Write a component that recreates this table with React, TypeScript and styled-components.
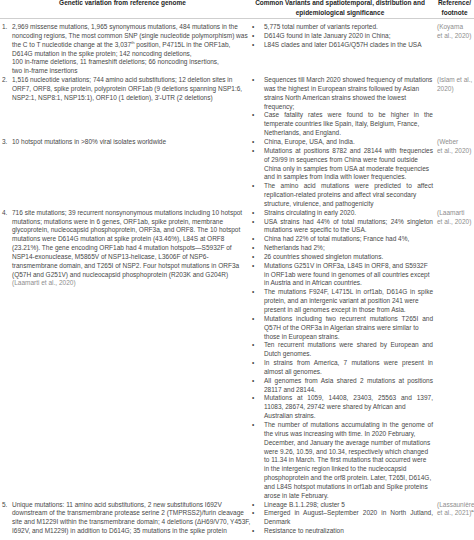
import React from 'react';
import styled, { createGlobalStyle } from 'styled-components';

/* ====================== Styled Components ====================== */

const GlobalStyle = createGlobalStyle`
  html, body {
    margin: 0;
    padding: 0;
    background: #ffffff;
  }

  body {
    font-family: 'Liberation Sans', Arial, Helvetica, sans-serif;
    overflow: hidden;
  }
`;

const COLUMNS = '245px 190px 1fr';

const Table = styled.div`
  width: 474px;
  margin-top: -2px; /* 원본은 헤더 윗부분이 잘려 있음 */
  font-size: 6.5px;
  color: #484848;
`;

const HeaderRow = styled.div`
  display: grid;
  grid-template-columns: ${COLUMNS};
  height: 20px;
  line-height: 10px;
  font-weight: 700;
  color: #1f1f1f;
  border-bottom: 1px solid #cfcfcf;
`;

const HeadCell = styled.div<{ $align?: 'start' | 'center' }>`
  display: flex;
  flex-direction: column;
  justify-content: ${({ $align }) => ($align === 'start' ? 'flex-start' : 'center')};
  text-align: center;
  white-space: nowrap;
`;

const Body = styled.div`
  padding-top: 4px;
`;

const BodyRow = styled.div`
  display: grid;
  grid-template-columns: ${COLUMNS};
  line-height: 8.85px;
`;

const GeneCell = styled.div`
  display: flex;
  padding-left: 2px;
`;

const ItemNum = styled.span`
  width: 10px;
  flex-shrink: 0;
`;

const TextLine = styled.div<{ $justify?: boolean }>`
  height: 8.85px;
  white-space: ${({ $justify }) => ($justify ? 'normal' : 'nowrap')};
  text-align: ${({ $justify }) => ($justify ? 'justify' : 'left')};
  text-align-last: ${({ $justify }) => ($justify ? 'justify' : 'auto')};
`;

const VariantList = styled.div`
  display: flex;
  flex-direction: column;
  padding-right: 2px;
`;

const BulletItem = styled.div`
  display: flex;
`;

const BulletDot = styled.span`
  width: 19px;
  flex-shrink: 0;
  padding-left: 7px;
  box-sizing: border-box;
`;

const BulletText = styled.div`
  flex: 1;
  min-width: 0;
`;

const RefCell = styled.div`
  padding-left: 2px;
  color: #8e8e8e;
`;

const RefText = styled.span`
  color: #8e8e8e;
`;

const Sup = styled.sup`
  font-size: 4.2px;
  line-height: 0;
  vertical-align: 2.6px;
`;

const FootMark = styled.sup`
  font-size: 4.2px;
  line-height: 0;
  vertical-align: 2.6px;
  color: #333333;
`;

/* ====================== Data ====================== */

type Justified = { justify: React.ReactNode };
type Line = string | React.ReactElement | Justified;

type Bullet = Line[];

type TableRow = {
  num: string;
  gene: Line[];
  variants: Bullet[];
  refs: React.ReactNode[];
};

const J = (text: React.ReactNode): Justified => ({ justify: text });

const isJustified = (line: Line): line is Justified =>
  typeof line === 'object' && line !== null && 'justify' in line;

// 표 데이터 (줄바꿈은 원본 그대로)
const rows: TableRow[] = [
  {
    num: '1.',
    gene: [
      '2,969 missense mutations, 1,965 synonymous mutations, 484 mutations in the',
      'noncoding regions, The most common SNP (single nucleotide polymorphism) was',
      <>
        the C to T nucleotide change at the 3,037<Sup>th</Sup> position, P4715L in the ORF1ab,
      </>,
      'D614G mutation in the spike protein; 142 noncoding deletions,',
      '100 in-frame deletions, 11 frameshift deletions; 66 noncoding insertions,',
      'two in-frame insertions',
    ],
    variants: [
      ['5,775 total number of variants reported.'],
      ['D614G found in late January 2020 in China;'],
      ['L84S clades and later D614G/Q57H clades in the USA'],
    ],
    refs: ['(Koyama', 'et al., 2020)'],
  },
  {
    num: '2.',
    gene: [
      '1,516 nucleotide variations; 744 amino acid substitutions; 12 deletion sites in',
      'ORF7, ORF8, spike protein, polyprotein ORF1ab (9 deletions spanning NSP1:6,',
      'NSP2:1, NSP8:1, NSP15:1), ORF10 (1 deletion), 3′-UTR (2 deletions)',
    ],
    variants: [
      [
        'Sequences till March 2020 showed frequency of mutations',
        'was the highest in European strains followed by Asian',
        'strains North American strains showed the lowest',
        'frequency;',
      ],
      [
        J('Case fatality rates were found to be higher in the'),
        'temperate countries like Spain, Italy, Belgium, France,',
        'Netherlands, and England.',
      ],
    ],
    refs: ['(Islam et al.,', '2020)'],
  },
  {
    num: '3.',
    gene: ['10 hotspot mutations in >80% viral isolates worldwide'],
    variants: [
      ['China, Europe, USA, and India.'],
      [
        J('Mutations at positions 8782 and 28144 with frequencies'),
        'of 29/99 in sequences from China were found outside',
        'China only in samples from USA at moderate frequencies',
        'and in samples from India with lower frequencies.',
      ],
      [
        J('The amino acid mutations were predicted to affect'),
        'replication-related proteins and affect viral secondary',
        'structure, virulence, and pathogenicity',
      ],
    ],
    refs: ['(Weber', 'et al., 2020)'],
  },
  {
    num: '4.',
    gene: [
      '716 site mutations; 39 recurrent nonsynonymous mutations including 10 hotspot',
      'mutations; mutations were in 6 genes, ORF1ab, spike protein, membrane',
      'glycoprotein, nucleocapsid phosphoprotein, ORF3a, and ORF8. The 10 hotspot',
      'mutations were D614G mutation at spike protein (43.46%), L84S at ORF8',
      '(23.21%). The gene encoding ORF1ab had 4 mutation hotspots—S5932F of',
      'NSP14-exonuclease, M5865V of NSP13-helicase, L3606F of NSP6-',
      'transmembrane domain, and T265I of NSP2. Four hotspot mutations in ORF3a',
      '(Q57H and G251V) and nucleocapsid phosphoprotein (R203K and G204R)',
      <RefText>(Laamarti et al., 2020)</RefText>,
    ],
    variants: [
      ['Strains circulating in early 2020.'],
      [J('USA strains had 44% of total mutations; 24% singleton'), 'mutations were specific to the USA.'],
      ['China had 22% of total mutations; France had 4%,'],
      ['Netherlands had 2%;'],
      ['26 countries showed singleton mutations.'],
      [
        'Mutations G251V in ORF3a, L84S in ORF8, and S5932F',
        'in ORF1ab were found in genomes of all countries except',
        'in Austria and in African countries.',
      ],
      [
        J('The mutations F924F, L4715L in orf1ab, D614G in spike'),
        'protein, and an intergenic variant at position 241 were',
        'present in all genomes except in those from Asia.',
      ],
      [
        J('Mutations including two recurrent mutations T265I and'),
        'Q57H of the ORF3a in Algerian strains were similar to',
        'those in European strains.',
      ],
      [J('Ten recurrent mutations were shared by European and'), 'Dutch genomes.'],
      [J('In strains from America, 7 mutations were present in'), 'almost all genomes.'],
      [J('All genomes from Asia shared 2 mutations at positions'), '28117 and 28144.'],
      [
        J('Mutations at 1059, 14408, 23403, 25563 and 1397,'),
        '11083, 28674, 29742 were shared by African and',
        'Australian strains.',
      ],
      [
        J('The number of mutations accumulating in the genome of'),
        'the virus was increasing with time. In 2020 February,',
        'December, and January the average number of mutations',
        'were 9.26, 10.59, and 10.34, respectively which changed',
        'to 11.34 in March. The first mutations that occurred were',
        'in the intergenic region linked to the nucleocapsid',
        'phosphoprotein and the orf8 protein. Later, T265I, D614G,',
        'and L84S hotspot mutations in orf1ab and Spike proteins',
        'arose in late February.',
      ],
    ],
    refs: ['(Laamarti', 'et al., 2020)'],
  },
  {
    num: '5.',
    gene: [
      'Unique mutations: 11 amino acid substitutions, 2 new substitutions I692V',
      'downstream of the transmembrane protease serine 2 (TMPRSS2)/furin cleavage',
      'site and M1229I within the transmembrane domain; 4 deletions (ΔH69/V70, Y453F,',
      'I692V, and M1229I) in addition to D614G; 35 mutations in the spike protein',
    ],
    variants: [
      ['Lineage B.1.1.298; cluster 5'],
      [J('Emerged in August–September 2020 in North Jutland,'), 'Denmark'],
      ['Resistance to neutralization'],
    ],
    refs: [
      '(Lassaunière',
      <>
        et al., 2021)<FootMark>a</FootMark>
      </>,
    ],
  },
];

const renderLine = (line: Line, key: number) =>
  isJustified(line) ? (
    <TextLine key={key} $justify>
      {line.justify}
    </TextLine>
  ) : (
    <TextLine key={key}>{line}</TextLine>
  );

const App: React.FC = () => {
  return (
    <>
      <GlobalStyle />
      <Table>
        <HeaderRow>
          <HeadCell $align="start">Genetic variation from reference genome</HeadCell>
          <HeadCell>
            Common Variants and spatiotemporal, distribution and
            <br />
            epidemiological significance
          </HeadCell>
          <HeadCell>
            Reference/
            <br />
            footnote
          </HeadCell>
        </HeaderRow>

        <Body>
          {rows.map((row) => (
            <BodyRow key={row.num}>
              <GeneCell>
                <ItemNum>{row.num}</ItemNum>
                <div>{row.gene.map(renderLine)}</div>
              </GeneCell>

              <VariantList>
                {row.variants.map((bullet, i) => (
                  <BulletItem key={i}>
                    <BulletDot>•</BulletDot>
                    <BulletText>{bullet.map(renderLine)}</BulletText>
                  </BulletItem>
                ))}
              </VariantList>

              <RefCell>
                {row.refs.map((r, i) => (
                  <TextLine key={i}>{r}</TextLine>
                ))}
              </RefCell>
            </BodyRow>
          ))}
        </Body>
      </Table>
    </>
  );
};

export default App;
